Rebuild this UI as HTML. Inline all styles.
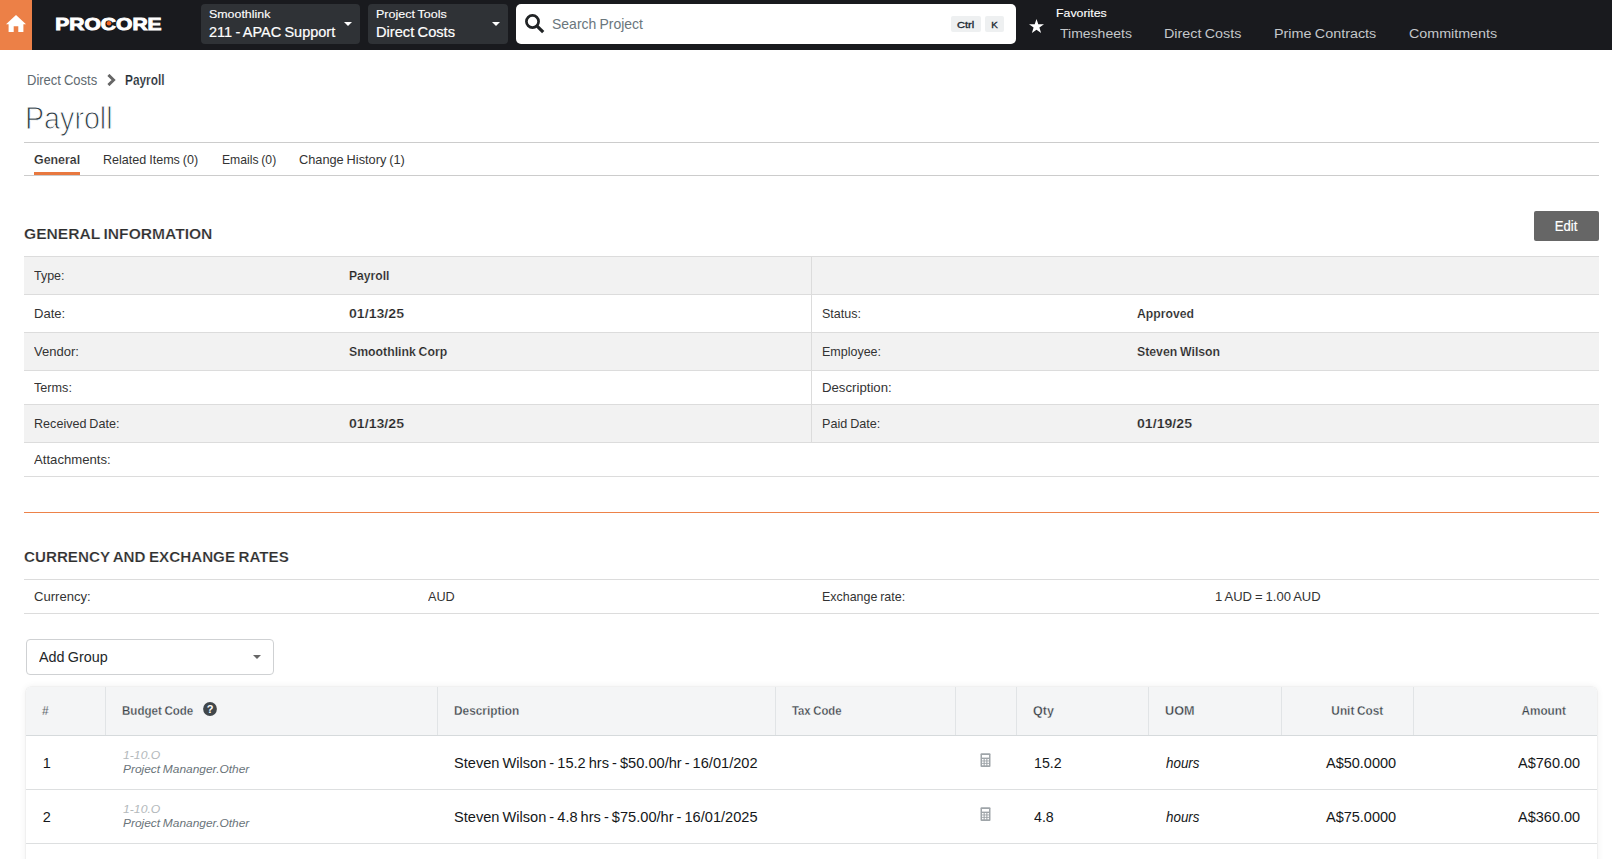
<!DOCTYPE html>
<html lang="en">
<head>
<meta charset="utf-8">
<title>Payroll - Direct Costs</title>
<style>
*{box-sizing:border-box;margin:0;padding:0}
html,body{width:1612px;height:859px;overflow:hidden;background:#fff}
body{position:relative;font-family:"Liberation Sans",sans-serif;font-size:14px;color:#333;-webkit-font-smoothing:antialiased}
.s{display:inline-block;white-space:nowrap;transform-origin:0 50%;word-spacing:-0.05em}
.s.c{transform-origin:50% 50%}
.s.w{word-spacing:-0.07em}
.s.r{transform-origin:100% 50%}

/* ---------- top navigation ---------- */
header{position:absolute;left:0;top:0;width:1612px;height:50px;background:#191a1e}
.home{position:absolute;left:0;top:0;width:32px;height:50px;background:#ec8047}
.home svg{position:absolute;left:6px;top:15px}
.logo{position:absolute;left:56px;top:16.4px;width:106px;height:15px;overflow:visible}
.picker{position:absolute;top:4px;height:40px;background:#2f3236;border-radius:4px;color:#fff}
.picker .l1{position:absolute;left:8px;top:3px;font-size:11.5px;line-height:14px;color:#fff;-webkit-text-stroke:0.12px #fff}
.picker .l2{position:absolute;left:8px;top:18.2px;font-size:14.4px;line-height:20px;color:#fff;-webkit-text-stroke:0.2px #fff}
.picker i{position:absolute;right:8px;top:18px;width:0;height:0;border-left:4px solid transparent;border-right:4px solid transparent;border-top:4px solid #fff}
.search{position:absolute;left:516px;top:4px;width:500px;height:40px;background:#fff;border-radius:5px}
.search svg{position:absolute;left:8.6px;top:10.3px}
.search .ph{position:absolute;left:36px;top:10px;font-size:14.5px;line-height:20px;color:#6a767c}
.kbd{position:absolute;top:12px;height:16px;background:#eef0f1;border-radius:2px;font-size:9.8px;line-height:18.4px;font-weight:normal;-webkit-text-stroke:0.35px #1d2b33;color:#1d2b33;text-align:center}
.star{position:absolute;left:1028.6px;top:19.3px}
.fav{position:absolute;left:1056.3px;top:6px;font-size:11.5px;line-height:14px;color:#fff;-webkit-text-stroke:0.12px #fff}
.navlink{position:absolute;top:23.6px;font-size:13.7px;line-height:20px;color:#c4c7ca}

/* ---------- page heading ---------- */
.crumb{position:absolute;left:27px;top:70px;height:20px;font-size:14px;line-height:20px;color:#5f6a70}
.crumb svg{position:absolute;left:80px;top:4px}
.crumb b{position:absolute;left:98px;top:0;color:#1d2b33;-webkit-text-stroke:0.2px #fff}
h1{position:absolute;left:25px;top:98.9px;font-size:31px;line-height:40px;font-weight:normal;color:#2c3a43;-webkit-text-stroke:1px #fff}
.tabs{position:absolute;left:24px;top:142px;width:1575px;height:34px;border-top:1px solid #ccc;border-bottom:1px solid #ccc}
.tab{position:absolute;top:6.5px;font-size:13.5px;line-height:20px;color:#333}
.tab.on{font-weight:bold;color:#2b2b2b;-webkit-text-stroke:0.2px #fff}
.tab.on:after{content:"";position:absolute;left:0;width:46px;top:22.5px;height:3px;background:#e8783f}
h2{position:absolute;left:24px;font-size:15px;line-height:20px;font-weight:bold;color:#2e2e2e;-webkit-text-stroke:0.2px #fff}
.btn{position:absolute;left:1534px;top:211px;width:65px;height:30px;background:#666;border-radius:2px;color:#fff;font-size:14px;line-height:30px;text-align:center;-webkit-text-stroke:0.2px #fff}

/* ---------- info tables ---------- */
table{border-collapse:collapse;table-layout:fixed}
.info{position:absolute;left:24px;width:1575px;font-size:13.5px;color:#333}
.info td{padding:0 10px 1px;border-top:1px solid #dcdcdc;border-bottom:1px solid #dcdcdc;vertical-align:middle}
.info tr.g td{background:#f2f2f2}
.info td.v{font-weight:bold;color:#262626;-webkit-text-stroke:0.2px #fff}
.info tr.g td.v{-webkit-text-stroke-color:#f2f2f2}
.info td.d{border-left:1px solid #dcdcdc}
.hr{position:absolute;left:24px;top:512px;width:1575px;height:1px;background:#ed8249}

/* ---------- add group + line items ---------- */
.select{position:absolute;left:26px;top:639px;width:248px;height:36px;border:1px solid #cfd1d3;border-radius:4px;background:#fff;font-size:14.5px;line-height:34px;color:#232729;padding-left:12px}
.select i{position:absolute;left:226px;top:15px;width:0;height:0;border-left:4px solid transparent;border-right:4px solid transparent;border-top:4px solid #666}
.gridwrap{position:absolute;left:25.8px;top:686.8px;width:1571.2px;height:190px;border-radius:5px 5px 0 0;box-shadow:0 0 7px rgba(0,0,0,.08),0 0 0 0.6px rgba(0,0,0,.05);overflow:hidden}
.grid{width:1571.2px;color:#15181a}
.grid th{height:48.8px;background:#f4f5f6;border-bottom:1px solid #d6dadc;border-left:1px solid #e1e4e6;font-size:11.9px;font-weight:bold;color:#3a4248;-webkit-text-stroke:0.3px #f4f5f6;text-align:left;padding:0 0 0.8px 16.3px;vertical-align:middle}
.grid th:first-child,.grid td:first-child{border-left:0}
.grid th.n{text-align:right;padding:0 30px 0.8px 0}
.grid td{height:54px;border-bottom:1px solid #dddfe0;font-size:14.5px;padding:0 0 0 17px;vertical-align:middle;background:#fff}
.grid td.n{text-align:right;padding:0 17px 0 0}
.grid td.n:last-child{padding-right:16.8px}
.grid th.n:last-child{padding-right:30.6px}
.grid td.q{padding-left:17.8px}
.grid td i{font-style:italic}
.bc{display:block;font-style:italic;line-height:14px;margin-left:0.8px}
.bc.a{font-size:10.7px;color:#b4b9bc;line-height:13px}
.bc.b{font-size:11.3px;color:#6a747a}
.help{display:inline-block;vertical-align:-1.2px;position:relative;top:-1px;margin-left:7.4px}
.calc{display:block;margin-left:7.5px;margin-top:-5.6px}
</style>
</head>
<body>

<header>
  <a class="home">
    <svg width="20" height="17" viewBox="0 0 20 17"><path d="M10 0 L20 9.2 L17.4 9.2 L17.4 17 L12.3 17 L12.3 11.2 L7.7 11.2 L7.7 17 L2.6 17 L2.6 9.2 L0 9.2 Z" fill="#fff"/></svg>
  </a>
  <svg class="logo" viewBox="0 0 106 15">
    <text x="-0.7" y="13.5" font-family="Liberation Sans, sans-serif" font-weight="bold" font-size="17" fill="#fff" stroke="#fff" stroke-width="0.95" stroke-linejoin="miter" textLength="106.3" lengthAdjust="spacingAndGlyphs">PROCORE</text>
    <circle cx="53" cy="7.2" r="2.3" fill="#f26522"/>
  </svg>
  <div class="picker" style="left:201px;width:159px">
    <span class="l1"><span class="s" id="h1" style="transform:scaleX(1.0793)">Smoothlink</span></span>
    <span class="l2"><span class="s" id="h2" style="transform:scaleX(1.0072)">211 - APAC Support</span></span><i></i>
  </div>
  <div class="picker" style="left:368px;width:140px">
    <span class="l1"><span class="s" id="h3" style="transform:scaleX(1.0866)">Project Tools</span></span>
    <span class="l2"><span class="s" id="h4" style="transform:scaleX(1.0173)">Direct Costs</span></span><i></i>
  </div>
  <div class="search">
    <svg width="20" height="20" viewBox="0 0 20 20"><circle cx="7.5" cy="7.5" r="6.1" fill="none" stroke="#202325" stroke-width="2.7"/><path d="M11.6 11.6 L18.2 18.2" stroke="#202325" stroke-width="3.2"/></svg>
    <span class="ph"><span class="s" id="h5" style="transform:scaleX(0.9642)">Search Project</span></span>
    <span class="kbd" style="left:435px;width:30px"><span class="s c" id="h6" style="transform:scaleX(1.1344)">Ctrl</span></span>
    <span class="kbd" style="left:469px;width:19px">K</span>
  </div>
  <svg class="star" width="15" height="14" viewBox="0 0 15 14"><path d="M7.5 0 L9.3 5.2 L15 5.3 L10.4 8.6 L12.1 14 L7.5 10.8 L2.9 14 L4.6 8.6 L0 5.3 L5.7 5.2 Z" fill="#fff"/></svg>
  <span class="fav"><span class="s" id="h7" style="transform:scaleX(1.0720)">Favorites</span></span>
  <span class="navlink" style="left:1060px"><span class="s" id="h8" style="transform:scaleX(1.0235)">Timesheets</span></span>
  <span class="navlink" style="left:1164px"><span class="s" id="h9" style="transform:scaleX(1.0479)">Direct Costs</span></span>
  <span class="navlink" style="left:1273.8px"><span class="s" id="h10" style="transform:scaleX(1.0499)">Prime Contracts</span></span>
  <span class="navlink" style="left:1408.5px"><span class="s" id="h11" style="transform:scaleX(1.0436)">Commitments</span></span>
</header>

<main>

  <nav class="crumb"><span class="s" id="c1" style="transform:scaleX(0.9292)">Direct Costs</span>
    <svg width="9" height="12" viewBox="0 0 9 12"><path d="M1.4 0.9 L6.6 6 L1.4 11.1" fill="none" stroke="#666" stroke-width="2.9"/></svg>
    <b><span class="s" id="c2" style="transform:scaleX(0.8479)">Payroll</span></b>
  </nav>
  <h1><span class="s" id="c3" style="transform:scaleX(0.9244)">Payroll</span></h1>
  <div class="tabs">
    <span class="tab on" style="left:10px"><span class="s" id="t1" style="transform:scaleX(0.9168)">General</span></span>
    <span class="tab" style="left:79px"><span class="s" id="t2" style="transform:scaleX(0.9306)">Related Items (0)</span></span>
    <span class="tab" style="left:198px"><span class="s" id="t3" style="transform:scaleX(0.9019)">Emails (0)</span></span>
    <span class="tab" style="left:275px"><span class="s" id="t4" style="transform:scaleX(0.9450)">Change History (1)</span></span>
  </div>

  <h2 style="top:223.8px"><span class="s" id="g1" style="transform:scaleX(1.0397)">GENERAL INFORMATION</span></h2>
  <a class="btn"><span class="s c" id="g2" style="transform:scaleX(0.9368)">Edit</span></a>

  <table class="info" style="top:256px">
    <colgroup><col style="width:315px"><col style="width:472.5px"><col style="width:315px"><col style="width:472.5px"></colgroup>
    <tr class="g" style="height:38px"><td><span class="s" id="i1" style="transform:scaleX(0.9234)">Type:</span></td><td class="v"><span class="s" id="i2" style="transform:scaleX(0.8994)">Payroll</span></td><td class="d"></td><td></td></tr>
    <tr style="height:38px"><td><span class="s" id="i3" style="transform:scaleX(0.9665)">Date:</span></td><td class="v"><span class="s" id="i4" style="transform:scaleX(1.0464)">01/13/25</span></td><td class="d"><span class="s" id="i5" style="transform:scaleX(0.9255)">Status:</span></td><td class="v"><span class="s" id="i6" style="transform:scaleX(0.9045)">Approved</span></td></tr>
    <tr class="g" style="height:38px"><td><span class="s" id="i7" style="transform:scaleX(0.9646)">Vendor:</span></td><td class="v"><span class="s" id="i8" style="transform:scaleX(0.9086)">Smoothlink Corp</span></td><td class="d"><span class="s" id="i9" style="transform:scaleX(0.9248)">Employee:</span></td><td class="v"><span class="s" id="i10" style="transform:scaleX(0.9084)">Steven Wilson</span></td></tr>
    <tr style="height:34px"><td><span class="s" id="i11" style="transform:scaleX(0.9358)">Terms:</span></td><td></td><td class="d"><span class="s" id="i12" style="transform:scaleX(0.9778)">Description:</span></td><td></td></tr>
    <tr class="g" style="height:38px"><td><span class="s" id="i13" style="transform:scaleX(0.9321)">Received Date:</span></td><td class="v"><span class="s" id="i14" style="transform:scaleX(1.0464)">01/13/25</span></td><td class="d"><span class="s" id="i15" style="transform:scaleX(0.9347)">Paid Date:</span></td><td class="v"><span class="s" id="i16" style="transform:scaleX(1.0464)">01/19/25</span></td></tr>
    <tr style="height:34px"><td><span class="s" id="i17" style="transform:scaleX(0.9734)">Attachments:</span></td><td></td><td></td><td></td></tr>
  </table>

  <div class="hr"></div>
  <h2 style="top:546.6px"><span class="s" id="g3" style="transform:scaleX(1.0120)">CURRENCY AND EXCHANGE RATES</span></h2>
  <table class="info" style="top:579px">
    <colgroup><col style="width:393.75px"><col style="width:393.75px"><col style="width:393.75px"><col style="width:393.75px"></colgroup>
    <tr style="height:34px"><td><span class="s" id="i18" style="transform:scaleX(0.9673)">Currency:</span></td><td><span class="s" id="i19" style="transform:scaleX(0.9398)">AUD</span></td><td><span class="s" id="i20" style="transform:scaleX(0.9219)">Exchange rate:</span></td><td><span class="s" id="i21" style="transform:scaleX(0.9653)">1 AUD = 1.00 AUD</span></td></tr>
  </table>

  <div class="select"><span class="s" id="a1" style="transform:scaleX(0.9898)">Add Group</span><i></i></div>

  <div class="gridwrap">
  <table class="grid">
    <colgroup><col style="width:79.7px"><col style="width:332px"><col style="width:338px"><col style="width:180.5px"><col style="width:60.5px"><col style="width:132px"><col style="width:133px"><col style="width:132px"><col style="width:183.5px"></colgroup>
    <thead><tr>
      <th>#</th>
      <th><span class="s" id="k1" style="transform:scaleX(0.9715)">Budget Code</span><svg class="help" width="14" height="14" viewBox="0 0 14 14"><circle cx="7" cy="7" r="6.9" fill="#41474b"/><text x="7" y="10.9" text-anchor="middle" font-family="Liberation Sans, sans-serif" font-weight="bold" font-size="11" fill="#fff">?</text></svg></th>
      <th><span class="s" id="k2" style="transform:scaleX(0.9966)">Description</span></th>
      <th><span class="s" id="k3" style="transform:scaleX(0.9511)">Tax Code</span></th>
      <th></th>
      <th><span class="s" id="k4" style="transform:scaleX(1.0541)">Qty</span></th>
      <th><span class="s" id="k5" style="transform:scaleX(1.0631)">UOM</span></th>
      <th class="n"><span class="s r" id="k6" style="transform:scaleX(0.9933)">Unit Cost</span></th>
      <th class="n"><span class="s r" id="k7" style="transform:scaleX(0.9906)">Amount</span></th>
    </tr></thead>
    <tbody>
    <tr>
      <td>1</td>
      <td><span class="bc a"><span class="s" id="r1" style="transform:scaleX(1.1411)">1-10.O</span></span><span class="bc b"><span class="s" id="r2" style="transform:scaleX(1.0562)">Project Mananger.Other</span></span></td>
      <td><span class="s w" id="r3" style="transform:scaleX(1.0073)">Steven Wilson - 15.2 hrs - $50.00/hr - 16/01/202</span></td>
      <td></td>
      <td><svg class="calc" width="11" height="14" viewBox="0 0 11 14"><rect x="0.5" y="0.2" width="10" height="13.7" rx="1" fill="#9fa5a9"/><rect x="2" y="2" width="7" height="2.6" fill="#fff"/><g fill="#fff"><rect x="2" y="6" width="1.6" height="1.5"/><rect x="4.7" y="6" width="1.6" height="1.5"/><rect x="7.4" y="6" width="1.6" height="1.5"/><rect x="2" y="8.4" width="1.6" height="1.5"/><rect x="4.7" y="8.4" width="1.6" height="1.5"/><rect x="7.4" y="8.4" width="1.6" height="1.5"/><rect x="2" y="10.8" width="1.6" height="1.5"/><rect x="4.7" y="10.8" width="1.6" height="1.5"/><rect x="7.4" y="10.8" width="1.6" height="1.5"/></g></svg></td>
      <td class="q"><span class="s" id="r4" style="transform:scaleX(0.9775)">15.2</span></td>
      <td class="q"><i><span class="s" id="r5" style="transform:scaleX(0.9233)">hours</span></i></td>
      <td class="n"><span class="s r" id="r6" style="transform:scaleX(1.0006)">A$50.0000</span></td>
      <td class="n"><span class="s r" id="r7" style="transform:scaleX(0.9985)">A$760.00</span></td>
    </tr>
    <tr>
      <td>2</td>
      <td><span class="bc a"><span class="s" id="r8" style="transform:scaleX(1.1411)">1-10.O</span></span><span class="bc b"><span class="s" id="r9" style="transform:scaleX(1.0562)">Project Mananger.Other</span></span></td>
      <td><span class="s w" id="r10" style="transform:scaleX(1.0073)">Steven Wilson - 4.8 hrs - $75.00/hr - 16/01/2025</span></td>
      <td></td>
      <td><svg class="calc" width="11" height="14" viewBox="0 0 11 14"><rect x="0.5" y="0.2" width="10" height="13.7" rx="1" fill="#9fa5a9"/><rect x="2" y="2" width="7" height="2.6" fill="#fff"/><g fill="#fff"><rect x="2" y="6" width="1.6" height="1.5"/><rect x="4.7" y="6" width="1.6" height="1.5"/><rect x="7.4" y="6" width="1.6" height="1.5"/><rect x="2" y="8.4" width="1.6" height="1.5"/><rect x="4.7" y="8.4" width="1.6" height="1.5"/><rect x="7.4" y="8.4" width="1.6" height="1.5"/><rect x="2" y="10.8" width="1.6" height="1.5"/><rect x="4.7" y="10.8" width="1.6" height="1.5"/><rect x="7.4" y="10.8" width="1.6" height="1.5"/></g></svg></td>
      <td class="q"><span class="s" id="r11" style="transform:scaleX(0.9816)">4.8</span></td>
      <td class="q"><i><span class="s" id="r12" style="transform:scaleX(0.9233)">hours</span></i></td>
      <td class="n"><span class="s r" id="r13" style="transform:scaleX(1.0006)">A$75.0000</span></td>
      <td class="n"><span class="s r" id="r14" style="transform:scaleX(0.9985)">A$360.00</span></td>
    </tr>
    <tr><td></td><td></td><td></td><td></td><td></td><td></td><td></td><td></td><td></td></tr>
    </tbody>
  </table>
  </div>


</main>

</body>
</html>
